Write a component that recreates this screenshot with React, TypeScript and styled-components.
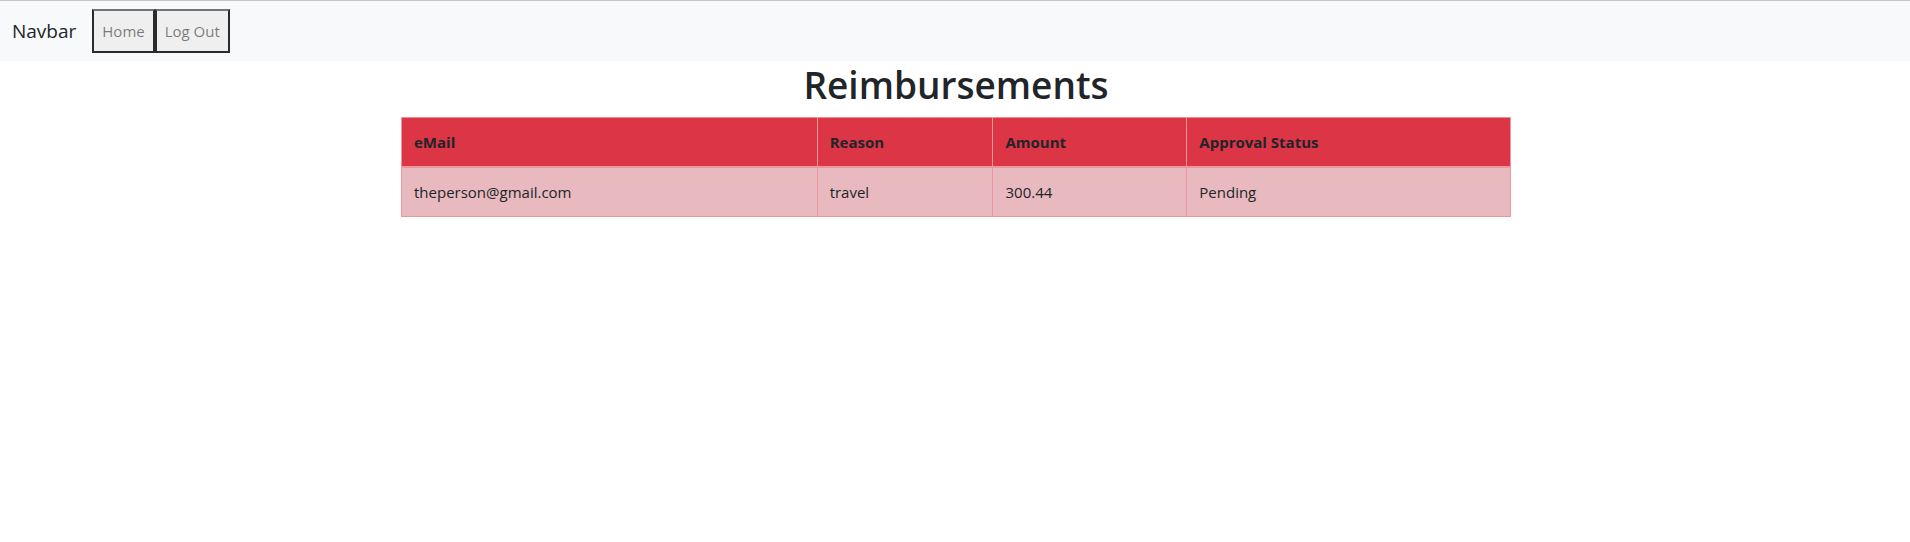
import { createGlobalStyle, styled } from "styled-components"

const GlobalStyle = createGlobalStyle`
    html, body {
        margin: 0;
        padding: 0;
        background: #ffffff;
        font-family: "Open Sans", "Noto Sans", sans-serif;
        color: #212529;
        font-size: 16px;
        line-height: 1.5;
    }
`

const Navbar = styled.nav`
    display: flex;
    align-items: center;
    background-color: #f8f9fa;
    border-top: 1px solid #c4c6c8;
    padding: 8px 12px;

    .brand {
        font-size: 19px;
        line-height: 30px;
        margin-right: 16px;
        color: #212529;
    }

    .links {
        display: flex;
    }
`

const NavButton = styled.button`
    font-family: "Open Sans", sans-serif;
    font-size: 15px;
    line-height: 24px;
    height: 44px;
    padding: 8px 8px;
    background: #efefef;
    color: rgba(0, 0, 0, 0.5);
    border: 2px solid #2b2b2b;
    border-top-color: #767676;
    margin: 0;
`

const Container = styled.div`
    max-width: 1110px;
    margin: 0 auto;
    padding-left: 2px;

    h1 {
        margin: 0 0 8px;
        font-size: 37px;
        font-weight: 600;
        line-height: 48px;
        text-align: center;
        color: #212529;
    }
`

const Table = styled.table`
    width: 100%;
    border-collapse: collapse;
    font-size: 15px;

    th, td {
        text-align: left;
        padding: 12px;
        line-height: 24px;
        border: 1px solid #ed969e;
        color: #212529;
    }

    thead th {
        background: #dc3545;
        font-weight: 700;
        border-bottom-width: 2px;
        border-top-color: #ee8d96;
    }

    tbody td {
        background: #e8babf;
    }
`

const Col = styled.col<{ $w: number }>`
    width: ${p => p.$w}px;
`

const rows = [
    { email: "theperson@gmail.com", reason: "travel", amount: "300.44", status: "Pending" },
]

export default () => <>
    <GlobalStyle />
    <Navbar>
        <span className="brand">Navbar</span>
        <div className="links">
            <NavButton>Home</NavButton>
            <NavButton>Log Out</NavButton>
        </div>
    </Navbar>
    <Container>
        <h1>Reimbursements</h1>
        <Table>
            <colgroup>
                <Col $w={416} />
                <Col $w={176} />
                <Col $w={194} />
                <Col $w={324} />
            </colgroup>
            <thead>
                <tr>
                    <th>eMail</th>
                    <th>Reason</th>
                    <th>Amount</th>
                    <th>Approval Status</th>
                </tr>
            </thead>
            <tbody>
                {rows.map(r => (
                    <tr key={r.email}>
                        <td>{r.email}</td>
                        <td>{r.reason}</td>
                        <td>{r.amount}</td>
                        <td>{r.status}</td>
                    </tr>
                ))}
            </tbody>
        </Table>
    </Container>
</>
